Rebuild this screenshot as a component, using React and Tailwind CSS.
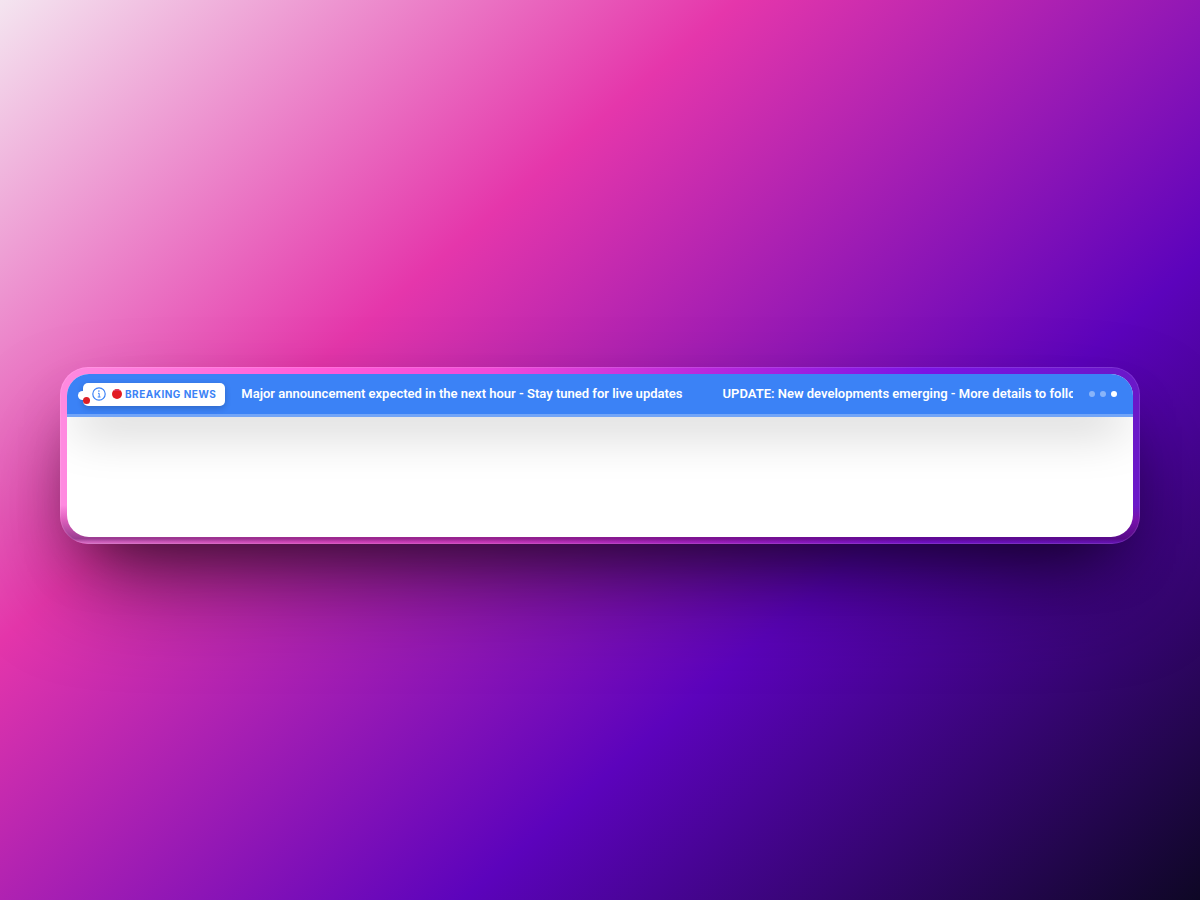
import React from "react";

const headlines = [
  "Major announcement expected in the next hour - Stay tuned for live updates",
  "UPDATE: New developments emerging - More details to follow",
];

const InfoIcon = () => (
  <svg className="size-[14px] shrink-0" viewBox="0 0 14 14" fill="none" stroke="currentColor">
    <circle cx="7" cy="7" r="6.2" strokeWidth="1.2" />
    <path d="M6 6.3h1.2v3.6M5.7 10h2.8" strokeWidth="1" />
    <circle cx="6.9" cy="4.1" r="0.8" fill="currentColor" stroke="none" />
  </svg>
);

const LiveDot = () => (
  <svg className="size-[10px] shrink-0" viewBox="0 0 10 10">
    <circle cx="5" cy="5" r="5" fill="#e21b23" />
    <path
      d="M2.2 1.7Q5 .2 7.8 1.7"
      fill="none"
      stroke="#d85aa8"
      strokeWidth="1"
      strokeDasharray="1.4 0.8"
    />
  </svg>
);

const TickerBar = () => (
  <div className="flex h-[43px] items-center border-b-3 border-[#72a5f8] bg-[#3b82f6] px-4 text-white shadow-[0_20px_50px_-10px_rgba(0,0,0,0.27)]">
    <div className="relative shrink-0">
      <div className="flex h-[23px] items-center rounded-[5px] bg-white px-[9px] text-[#3b82f6] shadow-[0_2px_6px_rgba(0,0,0,0.2)]">
        <InfoIcon />
        <span className="ml-[6px] flex items-center gap-[3px] text-[10px] font-bold tracking-wider">
          <LiveDot />
          BREAKING NEWS
        </span>
      </div>
      <span className="absolute top-2 -left-[5px] size-[9px] rounded-full bg-white" />
      <span className="absolute top-[14px] left-0 size-[7px] rounded-full bg-[#dc1f26]" />
    </div>
    <div className="ml-4 flex min-w-0 flex-1 gap-10 overflow-hidden font-['Roboto',sans-serif] text-[13px] leading-5 font-semibold whitespace-nowrap">
      {headlines.map((text) => (
        <span key={text} className="shrink-0">
          {text}
        </span>
      ))}
    </div>
    <div className="ml-4 flex shrink-0 gap-[5px]">
      <span className="size-[6px] rounded-full bg-white/40" />
      <span className="size-[6px] rounded-full bg-white/40" />
      <span className="size-[6px] rounded-full bg-white" />
    </div>
  </div>
);

const App = () => {
  return (
    <main className="flex min-h-screen items-center bg-[linear-gradient(139deg,#f4e5f0_0%,#e536ab_33%,#5c03bc_67%,#0e0725_100%)] px-[60px] pt-[11px] font-['Inter',sans-serif]">
      <div className="w-full rounded-[28px] bg-[linear-gradient(to_bottom,transparent_78%,rgba(150,0,110,0.3)_86%,rgba(70,0,80,0.55)_97%,rgba(70,0,90,0.25)_99%),linear-gradient(to_right,#ff8ae0,#ff5ad8_25%,#f04ad8_40%,#b828dc_60%,#7c14e4_80%,#6a18c8)] p-[7px] shadow-[inset_0_0_0_1px_rgba(255,255,255,0.12),0_50px_100px_-20px_rgba(0,0,0,0.6),0_30px_60px_-30px_rgba(0,0,0,0.5)]">
        <div className="min-h-[163px] overflow-hidden rounded-[22px] bg-white">
          <TickerBar />
        </div>
      </div>
    </main>
  );
};

export default App;
